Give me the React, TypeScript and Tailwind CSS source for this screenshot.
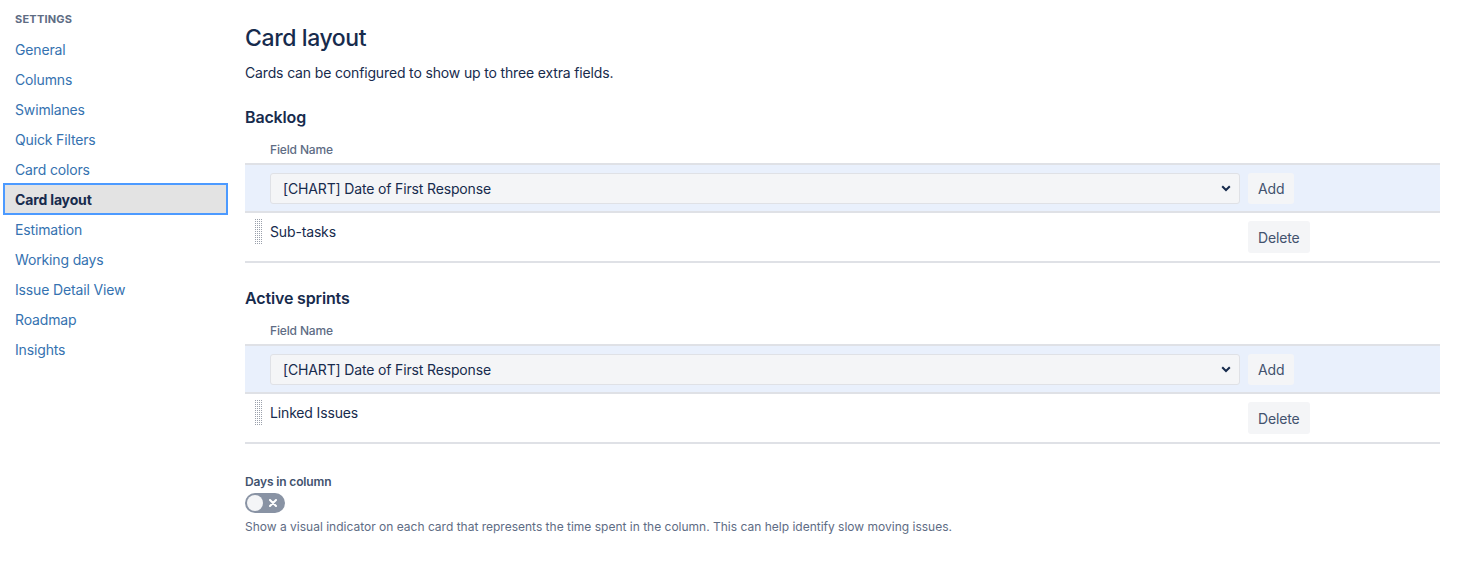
import React from "react"

const navItems = [
  "General",
  "Columns",
  "Swimlanes",
  "Quick Filters",
  "Card colors",
  "Card layout",
  "Estimation",
  "Working days",
  "Issue Detail View",
  "Roadmap",
  "Insights",
]

const Grip = () => (
  <svg width="8" height="26" className="block">
    <defs>
      <pattern id="grip" width="2" height="2" patternUnits="userSpaceOnUse">
        <rect width="1" height="1" fill="#9aa0ab" />
      </pattern>
    </defs>
    <rect width="8" height="26" fill="url(#grip)" />
  </svg>
)

const Chevron = () => (
  <svg width="10" height="7" viewBox="0 0 10 7" className="absolute right-[9px] top-[12px]">
    <path d="M1.2 1.2 5 5 8.8 1.2" fill="none" stroke="#172b4d" strokeWidth="2" />
  </svg>
)

const FieldTable = (props: { field: string }) => (
  <div className="w-[1195px]">
    <div className="pl-[25px] pt-[15px] pb-[5px] text-[12px] leading-[16px] font-medium text-[#5e6c84]">
      Field Name
    </div>
    <div className="flex h-[50px] items-center border-y-2 border-[#dfe1e6] bg-[#e9f0fc] pl-[25px]">
      <div className="relative w-[970px]">
        <select
          className="h-[31px] w-full appearance-none rounded-[3px] border border-[#dfe1e6] bg-[#f4f5f7] pl-[12px] text-[14px] text-[#172b4d] outline-none"
          defaultValue="chart"
        >
          <option value="chart">[CHART] Date of First Response</option>
        </select>
        <Chevron />
      </div>
      <button className="ml-[8px] h-[31px] rounded-[3px] bg-[#f4f5f7] px-[10px] text-[14px] text-[#42526e]">
        Add
      </button>
    </div>
    <div className="flex h-[50px] border-b-2 border-[#dfe1e6] pt-[6px]">
      <div className="w-[25px] pl-[10px]">
        <Grip />
      </div>
      <div className="w-[970px] pt-[3px] text-[14px] leading-[20px] text-[#172b4d]">{props.field}</div>
      <div className="ml-[8px] pt-[2px]">
        <button className="h-[32px] rounded-[3px] bg-[#f4f5f7] px-[10px] text-[14px] text-[#42526e]">
          Delete
        </button>
      </div>
    </div>
  </div>
)

export default function App() {
  return (
    <div className="flex min-h-screen bg-white font-['Inter',sans-serif] tracking-[-0.15px] text-[#172b4d]">
      <aside className="w-[228px] shrink-0 pt-[4px]">
        <div className="flex h-[30px] items-center px-[15px] text-[11px] font-bold uppercase tracking-[0.02em] text-[#5e6c84]">
          Settings
        </div>
        {navItems.map((item) =>
          item === "Card layout" ? (
            <div
              key={item}
              className="-my-px ml-[3px] flex h-[32px] items-center border-2 border-[#4c9aff] bg-[#e3e3e3] pl-[10px] text-[14px] font-bold text-[#172b4d]"
            >
              {item}
            </div>
          ) : (
            <div key={item} className="flex h-[30px] items-center px-[15px] text-[14px] text-[#3572b0]">
              {item}
            </div>
          )
        )}
      </aside>
      <main className="pl-[17px] pt-[24px]">
        <h1 className="text-[23px] leading-[28px] font-medium tracking-[-0.4px] text-[#172b4d]">Card layout</h1>
        <p className="mt-[11px] text-[14px] leading-[20px]">
          Cards can be configured to show up to three extra fields.
        </p>
        <h2 className="mt-[24px] text-[16px] leading-[20px] font-semibold">Backlog</h2>
        <FieldTable field="Sub-tasks" />
        <h2 className="mt-[25px] text-[16px] leading-[20px] font-semibold">Active sprints</h2>
        <FieldTable field="Linked Issues" />
        <div className="mt-[30px] text-[12px] leading-[16px] font-semibold text-[#42526e]">Days in column</div>
        <div className="mt-[3px] flex h-[20px] w-[40px] items-center rounded-full bg-[#8993a4] px-[2px]">
          <div className="h-[16px] w-[16px] rounded-full bg-[#f4f5f7]" />
          <svg width="8" height="8" viewBox="0 0 8 8" className="ml-[6px]">
            <path d="M1 1 7 7M7 1 1 7" stroke="#fff" strokeWidth="2" strokeLinecap="round" />
          </svg>
        </div>
        <p className="mt-[6px] text-[12px] leading-[16px] tracking-normal text-[#5e6c84]">
          Show a visual indicator on each card that represents the time spent in the column. This can help identify slow moving issues.
        </p>
      </main>
    </div>
  )
}
